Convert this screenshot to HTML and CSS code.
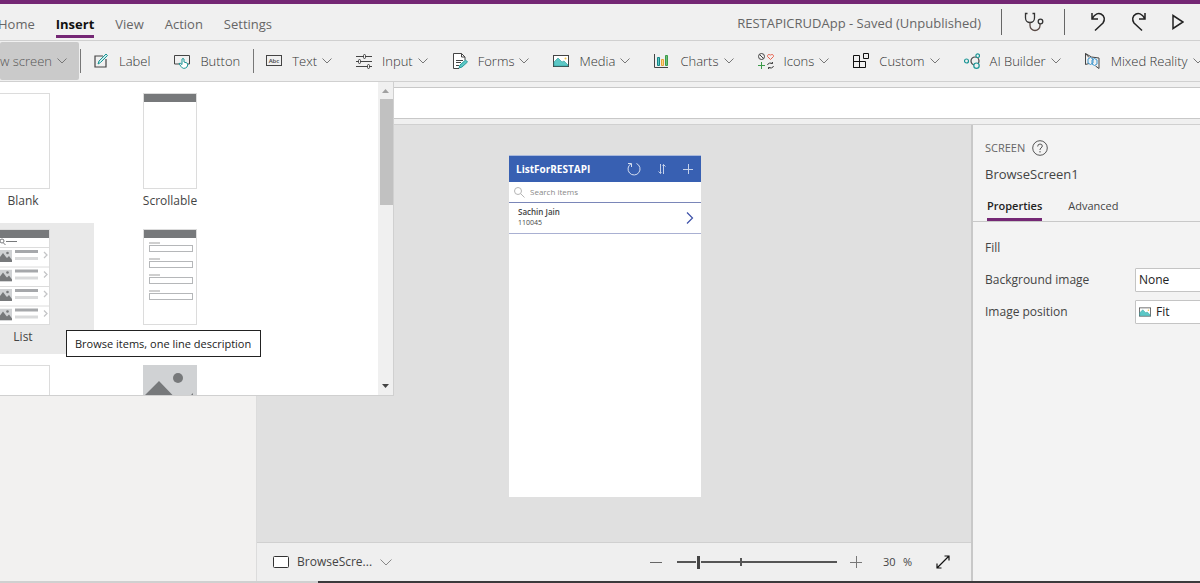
FILE: index.html
```html
<!DOCTYPE html>
<html lang="en">
<head>
  <meta charset="utf-8">
  <title>RESTAPICRUDApp - Power Apps</title>
  <link rel="stylesheet" href="styles.css">
</head>
<body>
  <svg class="defs" aria-hidden="true">
    <symbol id="chevron" viewBox="0 0 10 6"><path d="M.5 .5 5 5 9.500 .5" fill="none" stroke="currentColor"/></symbol>
    <symbol id="picture" viewBox="0 0 16 12">
      <rect x=".5" y=".5" width="15" height="11" fill="#fff" stroke="#444"/>
      <path d="M1 7 5 3l4 4 2-1 4 4v1H1z" fill="#5cc8c6" stroke="#2a9a9a" stroke-width=".6"/>
      <circle cx="12.500" cy="3.500" r="1" fill="#f5c242"/>
    </symbol>
    <symbol id="photo" viewBox="0 0 17 12">
      <rect width="17" height="12" fill="#d0d2d4"/>
      <path d="M0 12V11L4 6l1 1 3-4 3 4 1 1 2-2 3 4v2z" fill="#77797b"/>
      <circle cx="12.500" cy="3" r="1.300" fill="#77797b"/>
    </symbol>
  </svg>

  <header class="topbar">
    <nav class="tabs">
      <a href="#">Home</a>
      <a href="#" class="active">Insert</a>
      <a href="#">View</a>
      <a href="#">Action</a>
      <a href="#">Settings</a>
    </nav>
    <span class="app-name">RESTAPICRUDApp - Saved (Unpublished)</span>
    <div class="actions">
      <button class="checker" aria-label="App checker">
        <svg width="20" height="20" viewBox="0 0 20 20" fill="none" stroke="#333" stroke-width="1.300"><path d="M3.500 1.500H1.500V6a4.500 4.500 0 0 0 9 0V1.500H8.500"/><path d="M6 10.500v3a5 5 0 0 0 10 0V12" stroke="#5a4a45"/><circle cx="16.500" cy="9.500" r="2.300"/></svg>
      </button>
      <button aria-label="Undo">
        <svg width="16" height="20" viewBox="0 0 16 20" fill="none" stroke="#222" stroke-width="1.500"><path d="M2 1v6h6M2 7C5 1 9 1 11 2c4 2 4 6 2 9l-8 7.500"/></svg>
      </button>
      <button aria-label="Redo">
        <svg width="16" height="20" viewBox="0 0 16 20" fill="none" stroke="#222" stroke-width="1.500"><path d="M14 1v6H8M14 7C11 1 7 1 5 2 1 4 1 8 3 11l8 7.500"/></svg>
      </button>
      <button aria-label="Preview the app">
        <svg width="12" height="16" viewBox="0 0 12 16" fill="none" stroke="#222" stroke-width="1.500"><path d="M1 1.500v13L11 8z"/></svg>
      </button>
    </div>
  </header>

  <div class="toolbar">
    <button class="new-screen">New screen <svg class="chev"><use href="#chevron"/></svg></button>
    <span class="sep"></span>
    <button class="plain">
      <svg class="icon" viewBox="0 0 16 16" fill="none"><path d="M10 3H2v11h11V6" stroke="#444" stroke-width="1.200"/><path d="m5 11 1-3 7-7 1.500 1.500-7 7z" stroke="#1a9595" fill="#cdeeee"/></svg>Label</button>
    <button class="plain">
      <svg class="icon" viewBox="0 0 16 16" fill="none"><path d="M6 11H.5V2.500h15V11H13" stroke="#444"/><path d="M8 11.500V6q1-1 2 0v3l3 1q1 .5.700 2l-.7 2q-3.500 3-6-.5l-2-3q1-1 3 1z" stroke="#1a9595" fill="#fff"/></svg>Button</button>
    <span class="sep"></span>
    <button>
      <svg class="icon" viewBox="0 0 16 16"><rect x=".5" y="2.500" width="15" height="10" fill="none" stroke="#444"/><text x="8" y="10" font-size="6" font-weight="600" text-anchor="middle" fill="#444">Abc</text></svg>Text <svg class="chev"><use href="#chevron"/></svg></button>
    <button>
      <svg class="icon" viewBox="0 0 16 16" fill="none" stroke="#444"><path d="M0 3.500h7m3 0h6M0 8.500h2m3 0h11M0 13.500h11m3 0h2"/><rect x="7.500" y="1.500" width="2" height="4" rx="1"/><rect x="2.500" y="6.500" width="2" height="4" rx="1"/><rect x="11.500" y="11.500" width="2" height="4" rx="1"/></svg>Input <svg class="chev"><use href="#chevron"/></svg></button>
    <button>
      <svg class="icon" viewBox="0 0 16 16" fill="none" stroke="#444"><path d="M7 15.500H1.500V.5h8L13 4v3" fill="#fff"/><path d="M9.500.5V4H13M4 7.500h7M4 9.500h5M4 12.500h3"/><path d="m7 15 1-3 5.500-5 2 2-5.500 5z" fill="#5cc8c6" stroke="#2a9a9a"/></svg>Forms <svg class="chev"><use href="#chevron"/></svg></button>
    <button>
      <svg class="icon"><use href="#picture"/></svg>Media <svg class="chev"><use href="#chevron"/></svg></button>
    <button>
      <svg class="icon" viewBox="0 0 16 16" fill="none"><path d="M.5 1v13.500H14" stroke="#444"/><path d="M3.500 4.500h2v8h-2z" stroke="#158585" fill="#5cc8c6"/><path d="M7.500 6.500h2v6h-2z" stroke="#e8a33a" fill="#fbd98a"/><path d="M11.500 2.500h2v10h-2z" stroke="#3c9a4a" fill="#6cc07a"/></svg>Charts <svg class="chev"><use href="#chevron"/></svg></button>
    <button>
      <svg class="icon" viewBox="0 0 16 16" fill="none" stroke="#444"><circle cx="3.500" cy="3.500" r="3"/><path d="m1.500 1.500 4 4"/><path d="M12.500 6.500 9.500 3.500q0-3 3-1.500 3-1.500 3 1.500z" stroke="#e8604c"/><path d="M3.500 9v7M0 12.500h7" stroke="#3c9a4a"/><path d="M9.500 12q1-3 5-1.500V9m0 1.500h-2M15.500 13q-1 3-5 1.500V16m0-1.500h2"/></svg>Icons <svg class="chev"><use href="#chevron"/></svg></button>
    <button>
      <svg class="icon" viewBox="0 0 16 16" fill="none" stroke="#111"><path d="M.5 2.500h6v12h-6zM.5 8.500h12v6H.5zM10.500.5h5v5h-5z"/></svg>Custom <svg class="chev"><use href="#chevron"/></svg></button>
    <button>
      <svg class="icon" viewBox="0 0 16 16" fill="none" stroke="#1a9595" stroke-width="1.200"><circle cx="11" cy="8" r="4" stroke="#444"/><circle cx="2.500" cy="8" r="2"/><circle cx="13.700" cy="2.700" r="1.800" fill="#f0f0f0"/><circle cx="12.500" cy="12.700" r="2.700" fill="#f0f0f0"/></svg>AI Builder <svg class="chev"><use href="#chevron"/></svg></button>
    <button>
      <svg class="icon" viewBox="0 0 16 16" fill="none" stroke="#444"><path d="M4 10.500.5 11.500V.5l6 3.500 7.500 1v10.500L10.500 13M.5.5 4 4.500"/><path d="m3 6 2.500-1.500L8 6v4l-2.500 1.500L3 10zM7 7l2.500-1.500L12 7v4l-2.500 1.500L7 11z" stroke="#3a96d0"/></svg>Mixed Reality <svg class="chev"><use href="#chevron"/></svg></button>
  </div>

  <div class="formula"><input type="text" aria-label="Formula"></div>

  <main class="workspace">
    <aside class="tree"></aside>

    <section class="stage">
      <div class="canvas">
        <div class="phone">
          <div class="phone-head">
            <strong>ListForRESTAPI</strong>
            <svg width="14" height="14" viewBox="0 0 14 14" fill="none" stroke="#d5def0"><path d="M4 1.800a6 6 0 1 0 5.500-.3M1 1.500h3.500V5"/></svg>
            <svg width="8" height="12" viewBox="0 0 8 12" fill="none" stroke="#c5d1ea"><path d="M2.500 1v9.500M.5 8.500l2 2 1-1M5.500 11V1.500M4.500 2.500l1-1 2 2"/></svg>
            <svg width="10" height="10" viewBox="0 0 10 10" stroke="#c5d1ea"><path d="M5.500 0v10M0 5.500h10"/></svg>
          </div>
          <label class="phone-search">
            <svg width="11" height="11" viewBox="0 0 11 11" fill="none" stroke="#b5b5b5"><circle cx="4" cy="4" r="3.500"/><path d="m6.500 6.500 4 4"/></svg>
            <input type="text" placeholder="Search items">
          </label>
          <div class="phone-item">
            <div>
              <b>Sachin Jain</b>
              <span>110045</span>
            </div>
            <svg width="8" height="12" viewBox="0 0 8 12" fill="none" stroke="#3c50a8" stroke-width="1.200"><path d="m1 .5 5.500 5.500L1 11.500"/></svg>
          </div>
        </div>
      </div>
      <footer class="statusbar">
        <button class="screen-pick">
          <svg width="16" height="12" viewBox="0 0 16 12"><rect x=".5" y=".5" width="15" height="11" rx="1" fill="#fff" stroke="#333"/></svg>
          BrowseScre...
          <svg class="wide-chev" viewBox="0 0 12 7"><path d="m.5.5 5.500 5.500 5.500-5.500" fill="none" stroke="#888"/></svg>
        </button>
        <div class="zoom">
          <button aria-label="Zoom out"><svg width="12" height="12" viewBox="0 0 12 12" stroke="#666"><path d="M0 6.500h12"/></svg></button>
          <input type="range" min="10" max="170" value="30" aria-label="Zoom">
          <button aria-label="Zoom in"><svg width="12" height="12" viewBox="0 0 12 12" stroke="#777"><path d="M0 6.500h12M6.500 0v12"/></svg></button>
          <label class="percent"><input type="text" value="30" aria-label="Zoom percent"> %</label>
          <button class="fit" aria-label="Fit to window"><svg width="14" height="14" viewBox="0 0 14 14" fill="none" stroke="#111" stroke-width="1.200"><path d="M1 13 13 1M8.500 1H13v4.500M1 8.500V13h4.500"/></svg></button>
        </div>
      </footer>
    </section>

    <aside class="props">
      <div class="props-type">SCREEN
        <button aria-label="Help"><svg width="16" height="16" viewBox="0 0 16 16" fill="none" stroke="#555"><circle cx="8" cy="8" r="7.300"/><path d="M5.700 6.500q0-2.500 2.300-2.500t2.300 2q0 1-1.300 2T8 10M8 11v1.500"/></svg></button>
      </div>
      <div class="props-name">BrowseScreen1</div>
      <nav class="props-tabs">
        <a href="#" class="active">Properties</a>
        <a href="#">Advanced</a>
      </nav>
      <div class="fields">
        <div class="field"><span>Fill</span></div>
        <div class="field">
          <label for="bg">Background image</label>
          <div class="pick"><select id="bg"><option>None</option></select></div>
        </div>
        <div class="field">
          <label for="pos">Image position</label>
          <div class="pick with-icon"><svg><use href="#picture"/></svg><select id="pos"><option>Fit</option></select></div>
        </div>
      </div>
    </aside>
  </main>

  <div class="taskbar"></div>

  <div class="flyout">
    <div class="gallery">
      <button class="tile"><span class="thumb"></span>Blank</button>
      <button class="tile"><span class="thumb headed"></span>Scrollable</button>
      <button class="tile selected">
        <span class="thumb headed">
          <svg viewBox="0 0 52 86">
            <g fill="none" stroke="#77797b"><circle cx="5" cy="3" r="2"/><path d="m6.500 5 2 2M9 3.500h11"/></g>
            <g id="row">
              <path d="M0 9.500h52" stroke="#dcdcdc"/>
              <use href="#photo" x="-2" y="12" width="17" height="12"/>
              <path d="M18 13.500h23" stroke="#a6a8ab" stroke-width="3"/>
              <path d="M18 20.500h23" stroke="#d9dadb" stroke-width="3"/>
              <path d="m47 14 3 3-3 3" fill="none" stroke="#c4c5c7" stroke-width="1.300"/>
            </g>
            <use href="#row" y="19.500"/>
            <use href="#row" y="39"/>
            <use href="#row" y="58.500"/>
          </svg>
        </span>List</button>
      <button class="tile" aria-label="Form">
        <span class="thumb headed">
          <svg viewBox="0 0 52 86" fill="none">
            <g id="box"><path d="M5 5h11" stroke="#cfcfcf" stroke-width="2"/><rect x="5.500" y="7.500" width="43" height="6" stroke="#b5b7b9"/></g>
            <use href="#box" y="16"/>
            <use href="#box" y="32"/>
            <use href="#box" y="48"/>
          </svg>
        </span></button>
      <button class="tile" aria-label="Blank form"><span class="thumb"></span></button>
      <button class="tile" aria-label="Picture">
        <span class="thumb filled">
          <svg viewBox="0 0 54 96"><path d="m2 30 14-14 13.500 14zM48 30l2-2v2z" fill="#77797b"/><circle cx="35" cy="13" r="5" fill="#77797b"/></svg>
        </span></button>
    </div>
    <div class="scroll">
      <svg width="7" height="4" viewBox="0 0 7 4"><path d="M0 4 3.500 0 7 4z" fill="#a0a0a0"/></svg>
      <span class="scroll-thumb"></span>
      <svg class="down" width="7" height="4" viewBox="0 0 7 4"><path d="m0 0 3.500 4L7 0z" fill="#444"/></svg>
    </div>
  </div>
  <div class="tooltip" role="tooltip">Browse items, one line description</div>
</body>
</html>
```
FILE: styles.css
```css
* { box-sizing: border-box; }
body { margin: 0; height: 100vh; overflow: hidden; display: flex; flex-direction: column; position: relative; background: #f0f0f0; color: #444; font-family: "Open Sans", "Noto Sans", sans-serif; font-size: 12px; line-height: 16px; }
button { border: none; background: none; padding: 0; margin: 0; font: inherit; color: inherit; cursor: pointer; }
a { color: inherit; text-decoration: none; }
svg { display: block; flex: none; }
.defs { position: absolute; width: 0; height: 0; }

/* top bar */
.topbar { flex: none; display: flex; align-items: center; height: 41px; border-top: 4px solid #742774; border-bottom: 1px solid #d0d0d0; overflow: hidden; }
.tabs { display: flex; gap: 21px; margin-left: -2px; font-size: 13px; line-height: 20px; color: #666; padding-top: 8px; }
.tabs a { border-bottom: 3px solid transparent; padding-bottom: 1px; }
.tabs .active { color: #111; font-weight: 700; border-color: #742774; }
.app-name { margin-left: auto; padding-right: 20px; font-size: 13px; color: #666; padding-top: 2px; }
.actions { display: flex; align-items: center; gap: 25px; padding-right: 16px; }
.checker { border: solid #666; border-width: 0 1px; padding: 3px 20px 3px 22px; }

/* insert ribbon */
.toolbar { flex: none; display: flex; align-items: center; height: 41px; border-bottom: 1px solid #d0d0d0; overflow: hidden; font-size: 13px; font-weight: 300; color: #333; }
.toolbar button { display: flex; align-items: center; flex: none; white-space: nowrap; padding-left: 24px; }
.toolbar .plain { padding-left: 12px; padding-right: 12px; }
.toolbar .new-screen { justify-content: flex-end; width: 79px; height: 38px; padding: 0 12px; background: #cacaca; border-radius: 2px; color: #555; }
.toolbar .sep + button:not(.plain) { padding-left: 12px; }
.icon { width: 16px; height: 16px; margin-right: 10px; }
.chev { width: 10px; height: 6px; margin-left: 5px; color: #777; }
.sep { flex: none; width: 1px; height: 24px; background: #777; margin-left: 1px; }

.formula { flex: none; padding: 5px 0; border-bottom: 1px solid #d0d0d0; }
.formula input { display: block; width: 100%; height: 32px; border: solid #c8c8c8; border-width: 1px 0; background: #fff; }

/* workspace */
.workspace { flex: 1; display: flex; min-height: 0; }
.tree { flex: none; width: 257px; background: #f2f1f0; border-right: 1px solid #dcdcdc; }
.stage { flex: 1; display: flex; flex-direction: column; min-width: 0; }
.canvas { flex: 1; display: flex; justify-content: center; align-items: flex-start; background: #e0e0e0; padding: 30px 18px 0 0; }
.phone { width: 192px; height: 342px; background: #fff; font-size: 8px; line-height: 10px; }
.phone-head { display: flex; align-items: center; gap: 17px; height: 27px; padding: 0 8px 0 7px; background: #3860b2; border-top: 1px solid #a9b9dc; color: #fff; font-size: 10px; }
.phone-head strong { flex: 1; font-weight: 700; }
.phone-search { display: flex; align-items: center; gap: 5px; height: 21px; padding: 0 5px; border-bottom: 1px solid #7a86b8; }
.phone-search input { flex: 1; min-width: 0; border: none; padding: 0; font: inherit; background: none; }
.phone-search input::placeholder { color: #888; }
.phone-item { display: flex; justify-content: space-between; align-items: center; height: 31px; padding: 0 7px 1px 9px; border-bottom: 1px solid #a9b0d2; }
.phone-item b { display: block; color: #444; font-weight: 600; }
.phone-item span { font-size: 7px; }

.statusbar { flex: none; display: flex; align-items: center; justify-content: space-between; height: 39px; padding: 0 21px 0 16px; background: #efefef; border-top: 1px solid #d0d0d0; }
.screen-pick { display: flex; align-items: center; gap: 8px; }
.wide-chev { width: 12px; height: 7px; }
.zoom { display: flex; align-items: center; gap: 13px; }
.zoom input[type=range] { -webkit-appearance: none; appearance: none; width: 160px; height: 16px; margin: 0 0 0 2px; background: linear-gradient(#555, #555) 63px 50% / 2px 8px no-repeat, linear-gradient(#555, #555) 0 50% / 100% 2px no-repeat; }
.zoom input[type=range]::-webkit-slider-thumb { -webkit-appearance: none; width: 5px; height: 15px; background: #444; border: solid #efefef; border-width: 1px; }
.percent { display: flex; gap: 6px; font-size: 11px; margin-left: 8px; }
.percent input { width: 14px; border: none; padding: 0; background: none; font: inherit; color: inherit; }
.fit { margin-left: 11px; }

/* properties pane */
.props { flex: none; width: 229px; border-left: 2px solid #c8c8c8; background: #f3f3f3; overflow: hidden; }
.props-type { display: flex; align-items: center; gap: 7px; padding: 15px 12px 0; font-size: 11px; color: #666; }
.props-name { padding: 8px 12px 0; font-size: 13px; line-height: 20px; }
.props-tabs { display: flex; gap: 26px; padding: 12px 14px 0; border-bottom: 1px solid #c8c8c8; font-size: 11px; line-height: 20px; }
.props-tabs a { border-bottom: 3px solid transparent; padding-bottom: 2px; }
.props-tabs .active { font-weight: 600; color: #222; border-color: #742774; }
.fields { padding: 10px 0 0 12px; }
.field { display: flex; align-items: center; height: 32px; }
.field label { flex: none; width: 150px; }
.pick { flex: none; position: relative; width: 140px; }
.pick select { -webkit-appearance: none; appearance: none; display: block; width: 100%; height: 24px; border: 1px solid #c4c4c4; border-radius: 1px; background: #fff; padding: 0 3px; font: inherit; color: #222; }
.pick svg { position: absolute; left: 4px; top: 7px; width: 12px; height: 10px; }
.pick.with-icon select { padding-left: 20px; }

.taskbar { flex: none; height: 2px; background: linear-gradient(to right, #d0d0d0 318px, #3c3a3c 318px); }

/* new screen flyout */
.flyout { position: absolute; top: 82px; left: 0; width: 394px; height: 314px; display: flex; justify-content: space-between; background: #fff; border: solid #d0d0d0; border-width: 0 1px 1px 0; overflow: hidden; }
.gallery { display: grid; grid-template-columns: 142px 142px; grid-auto-rows: 131px; gap: 5px; margin-left: -48px; padding-top: 5px; }
.tile { display: flex; flex-direction: column; align-items: center; gap: 4px; padding-top: 6px; }
.selected { background: #e9e9e9; }
.thumb { flex: none; display: block; width: 54px; height: 96px; border: 1px solid #dcdcdc; background: #fff; overflow: hidden; }
.headed { padding-top: 8px; background: linear-gradient(#77797b 8px, #fff 8px); }
.filled { border: none; background: #d0d2d4; }
.thumb svg { width: 100%; }
.scroll { display: flex; flex-direction: column; align-items: center; width: 15px; padding: 7px 0; background: #f0f0f0; }
.scroll-thumb { width: 13px; height: 106px; margin-top: 6px; margin-left: 2px; background: #c1c1c1; }
.down { margin-top: auto; }
.tooltip { position: absolute; left: 66px; top: 330px; padding: 4px 9px 4px 8px; border: 1px solid #222; background: #fff; color: #222; font-size: 11px; line-height: 17px; white-space: nowrap; }
```
